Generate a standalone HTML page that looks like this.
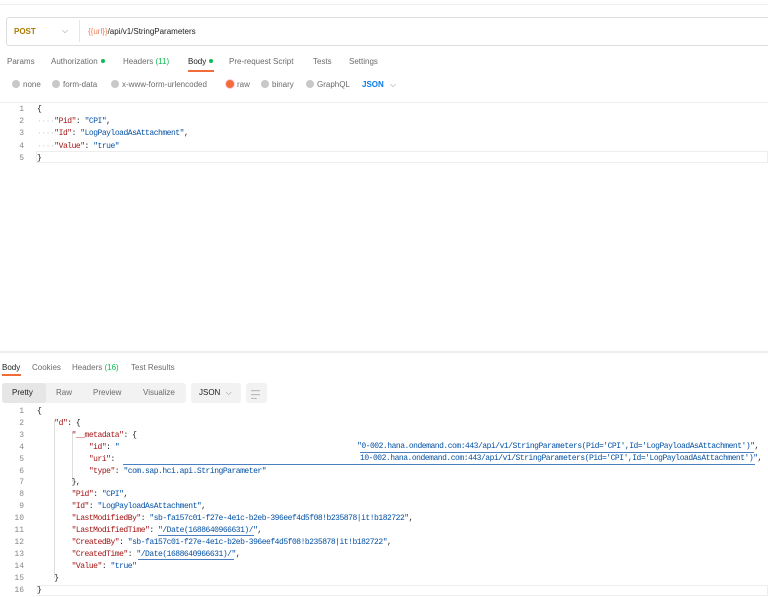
<!DOCTYPE html>
<html><head><meta charset="utf-8"><style>
*{margin:0;padding:0;box-sizing:border-box}
body{width:768px;height:596px;background:#fff;font-family:"Liberation Sans",sans-serif;position:relative;overflow:hidden;color:#212121}
.a{position:absolute;white-space:pre}
.t{font-size:8px;color:#6b6b6b}
.m{font-family:"Liberation Mono",monospace;font-size:8px;letter-spacing:-0.48px}
.k{color:#a31515}.s{color:#0451a5}.n{color:#237893}
.g{color:#888;font-family:"Liberation Mono",monospace;font-size:8px;text-align:right;width:20px}
.r{display:inline-block;width:8px;height:8px;border-radius:50%;background:#c8c8c8;vertical-align:-1px;margin-right:3px}
.dot{display:inline-block;width:4px;height:4px;border-radius:50%;background:#0cbb52;vertical-align:1px;margin-left:3px}
</style></head><body>
<div class="a" style="left:0;top:0;width:768px;height:5px;border-bottom:1px solid #eee"></div>
<div class="a" style="left:6px;top:17px;width:770px;height:29px;border:1px solid #ddd;border-radius:3px"></div>
<div class="a" style="left:14px;top:27px;font-size:8px;font-weight:bold;color:#ad7a03">POST</div>
<div class="a" style="left:62px;top:26px;font-size:8px;color:#888">⌵</div>
<div class="a" style="left:79px;top:20px;width:1px;height:22px;background:#e6e6e6"></div>
<div class="a" style="left:88px;top:27px;font-size:8px"><span style="color:#f07e55">{{url}}</span>/api/v1/StringParameters</div>
<div class="a t" style="left:7px;top:57px">Params</div>
<div class="a t" style="left:51px;top:57px">Authorization<span class="dot"></span></div>
<div class="a t" style="left:123px;top:57px">Headers <span style="color:#0cbb52">(11)</span></div>
<div class="a t" style="left:188px;top:57px;color:#212121">Body<span class="dot"></span></div>
<div class="a" style="left:188px;top:70px;width:26px;height:1.5px;background:#f26b3a"></div>
<div class="a t" style="left:229px;top:57px">Pre-request Script</div>
<div class="a t" style="left:313px;top:57px">Tests</div>
<div class="a t" style="left:349px;top:57px">Settings</div>
<div class="a t" style="left:12px;top:80px"><span class="r"></span>none</div>
<div class="a t" style="left:52px;top:80px"><span class="r"></span>form-data</div>
<div class="a t" style="left:111px;top:80px"><span class="r"></span>x-www-form-urlencoded</div>
<div class="a t" style="left:226px;top:80px"><span class="r" style="background:#f26b3a;box-shadow:0 0 0 1px #fcd"></span>raw</div>
<div class="a t" style="left:261px;top:80px"><span class="r"></span>binary</div>
<div class="a t" style="left:306px;top:80px"><span class="r"></span>GraphQL</div>
<div class="a" style="left:362px;top:80px;font-size:8px;font-weight:bold;color:#097bed">JSON <span style="font-weight:normal;color:#888;margin-left:4px">⌵</span></div>
<div class="a" style="left:0;top:102px;width:768px;height:1px;background:#eee"></div>
<div class="a" style="left:36px;top:151px;width:732px;height:12px;border:1px solid #eee"></div>
<div class="a g" style="left:4px;top:104px;line-height:12.2px">1
2
3
4
5</div>
<div class="a m" style="left:37px;top:104px;line-height:12.2px">{
<span style="color:#ccc">····</span><span class="k">"Pid"</span>: <span class="s">"CPI"</span>,
<span style="color:#ccc">····</span><span class="k">"Id"</span>: <span class="s">"LogPayloadAsAttachment"</span>,
<span style="color:#ccc">····</span><span class="k">"Value"</span>: <span class="s">"true"</span>
}</div>
<div class="a" style="left:0;top:351px;width:768px;height:2px;background:#eee"></div>
<div class="a t" style="left:2px;top:363px;color:#212121">Body</div>
<div class="a" style="left:2px;top:374px;width:19px;height:1.5px;background:#f26b3a"></div>
<div class="a t" style="left:32px;top:363px">Cookies</div>
<div class="a t" style="left:72px;top:363px">Headers <span style="color:#0cbb52">(16)</span></div>
<div class="a t" style="left:131px;top:363px">Test Results</div>
<div class="a" style="left:2px;top:383px;width:184px;height:20px;background:#f2f2f2;border-radius:3px"></div>
<div class="a" style="left:2px;top:383px;width:44px;height:20px;background:#e6e6e6;border-radius:3px"></div>
<div class="a t" style="left:12px;top:388px;color:#212121">Pretty</div>
<div class="a t" style="left:56px;top:388px">Raw</div>
<div class="a t" style="left:93px;top:388px">Preview</div>
<div class="a t" style="left:143px;top:388px">Visualize</div>
<div class="a" style="left:191px;top:383px;width:50px;height:20px;background:#f2f2f2;border-radius:3px"></div>
<div class="a" style="left:199px;top:388px;font-size:8px;color:#212121">JSON <span style="color:#888;margin-left:3px">⌵</span></div>
<div class="a" style="left:246px;top:383px;width:21px;height:20px;background:#f2f2f2;border-radius:3px"></div>
<div class="a" style="left:251px;top:388px;font-size:9px;color:#888;line-height:4px">—<br>—<br>--</div>
<div class="a" style="left:37px;top:585px;width:731px;height:11px;border:1px solid #eee"></div>
<div class="a" style="left:54px;top:420px;width:1px;height:158px;background:#ddd"></div>
<div class="a" style="left:72px;top:432px;width:1px;height:50px;background:#ddd"></div>
<div class="a g" style="left:4px;top:406px;line-height:11.9px">1
2
3
4
5
6
7
8
9
10
11
12
13
14
15
16</div>
<div class="a m" style="left:37px;top:406px;line-height:11.9px">{
    <span class="k">"d"</span>: {
        <span class="k">"__metadata"</span>: {
            <span class="k">"id"</span>: <span class="s">"</span>
            <span class="k">"uri"</span>:
            <span class="k">"type"</span>: <span class="s">"com.sap.hci.api.StringParameter"</span>
        },
        <span class="k">"Pid"</span>: <span class="s">"CPI"</span>,
        <span class="k">"Id"</span>: <span class="s">"LogPayloadAsAttachment"</span>,
        <span class="k">"LastModifiedBy"</span>: <span class="s">"sb-fa157c01-f27e-4e1c-b2eb-396eef4d5f08!b235878|it!b182722"</span>,
        <span class="k">"LastModifiedTime"</span>: <span class="s">"/Date(1688640966631)/"</span>,
        <span class="k">"CreatedBy"</span>: <span class="s">"sb-fa157c01-f27e-4e1c-b2eb-396eef4d5f08!b235878|it!b182722"</span>,
        <span class="k">"CreatedTime"</span>: <span class="s">"/Date(1688640966631)/"</span>,
        <span class="k">"Value"</span>: <span class="s">"true"</span>
    }
}</div>
<div class="a m s" style="left:357px;top:442px">"0-002.hana.ondemand.com:443/api/v1/StringParameters(Pid='CPI',Id='LogPayloadAsAttachment')"<span style="color:#212121">,</span></div>
<div class="a" style="left:360px;top:452px;width:394px;height:1px;background:#4a7fc1"></div>
<div class="a m s" style="left:360px;top:454px">10-002.hana.ondemand.com:443/api/v1/StringParameters(Pid='CPI',Id='LogPayloadAsAttachment')"<span style="color:#212121">,</span></div>
<div class="a" style="left:123px;top:464px;width:632px;height:1px;background:#4a7fc1"></div>
<div class="a" style="left:158px;top:535px;width:96px;height:1px;background:#4a7fc1"></div>
<div class="a" style="left:138px;top:559px;width:96px;height:1px;background:#4a7fc1"></div>
</body></html>
